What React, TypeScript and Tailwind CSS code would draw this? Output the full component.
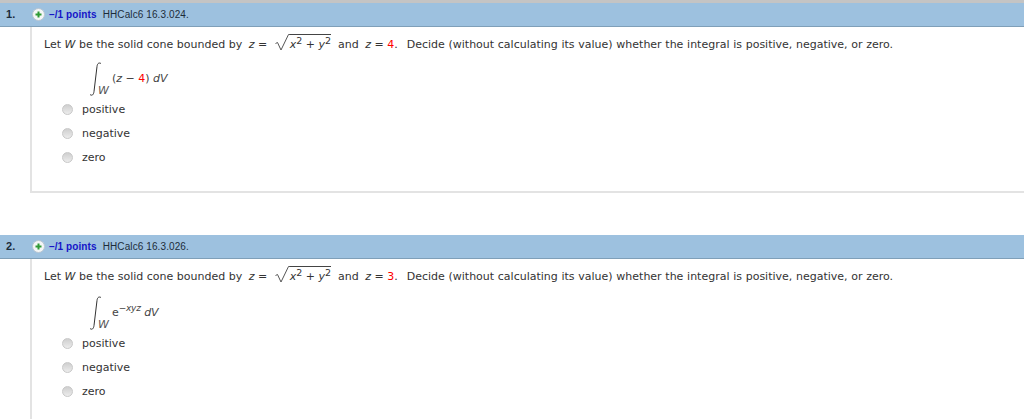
const sans = "font-['DejaVu_Sans',sans-serif]";

function Plus() {
  return (
    <span className="flex h-[13px] w-[13px] items-center justify-center rounded-full border border-[#b9c6d2] bg-[#f4f6f6]">
      <svg width="7" height="7" viewBox="0 0 7 7">
        <path d="M3.5 0.5v6M0.5 3.5h6" stroke="#2f9a35" strokeWidth="2" />
      </svg>
    </span>
  );
}

function Radio({ label }: { label: string }) {
  return (
    <div className="flex h-[24px] items-center">
      <span className="mb-[2px] h-[11px] w-[11px] rounded-full border border-[#c8c8c8] bg-gradient-to-b from-[#cfcfcf] to-[#ececec]" />
      <span className="ml-[9px] text-[11px] text-[#333]">{label}</span>
    </div>
  );
}

function Root() {
  return (
    <span className="ml-[4px] mr-[7px] inline-flex h-[22px] items-stretch">
      <svg width="15" height="17" viewBox="0 0 15 17">
        <path d="M0.5 9.5l2 -1 3.5 7.5 7.5 -15.5h1.5" fill="none" stroke="#555" strokeWidth="1" />
      </svg>
      <span className="h-[17px] border-t border-[#444] leading-[20px]">
        <i>x</i>
        <sup className="top-[-4px] text-[9.5px]">2</sup>
        <span> + </span>
        <i>y</i>
        <sup className="top-[-4px] text-[9.5px]">2</sup>
      </span>
    </span>
  );
}

function Integral({ top, children }: { top: string; children: React.ReactNode }) {
  return (
    <div className={`ml-[45px] flex h-[36px] items-center ${top}`}>
      <div className="relative h-[36px] w-[23px]">
        <svg width="14" height="36" viewBox="0 0 14 36" className="absolute left-0 top-0">
          <path d="M1 33.5c2 1.5 3.5 0.5 4 -3l3 -25c0.5 -3.5 2 -4 4 -3" fill="none" stroke="#333" strokeWidth="1" />
        </svg>
        <i className="absolute bottom-[-2px] left-[9px] text-[11px] text-[#555]">W</i>
      </div>
      <span className="text-[11px] text-[#444]">{children}</span>
    </div>
  );
}

function Question({ num, code, bound, height, children }: { num: string; code: string; bound: string; height: string; children: React.ReactNode }) {
  return (
    <section className={height}>
      <div className="flex h-[24px] items-center border-b border-[#7f9fb8] bg-[#9dc1df] font-['Liberation_Sans',sans-serif] text-[10px] tracking-[0.01em] text-[#1c2c3a]">
        <b className="w-[32px] pl-[6px] text-[11px]">{num}</b>
        <Plus />
        <b className="ml-[4px] text-[#1515c8]">–/1 points</b>
        <span className="ml-[6px]">{code}</span>
      </div>
      <div className={`ml-[30px] h-[calc(100%-24px)] border-l-2 border-[#e3e3e3] pl-[12px] pt-[7px] ${sans}`}>
        <p className="flex h-[22px] items-center whitespace-pre text-[11px] text-[#333]">
          Let <i>W</i> be the solid cone bounded by <i className="ml-[3px]">z</i> = <Root />and <i className="ml-[3px]">z</i> = <span className="text-[#f00]">{bound}</span>.
          <span className="ml-[9px] [word-spacing:0.2px]">Decide (without calculating its value) whether the integral is positive, negative, or zero.</span>
        </p>
        {children}
        <div className="ml-[18px] mt-[1px]">
          <Radio label="positive" />
          <Radio label="negative" />
          <Radio label="zero" />
        </div>
      </div>
    </section>
  );
}

export default function App() {
  return (
    <div className="h-[419px] overflow-hidden bg-white">
      <div className="h-[3px] bg-[#c4c4c4]" />
      <Question num="1." code="HHCalc6 16.3.024." bound="4" height="h-[188px]">
        <Integral top="mt-[5px]">
          (<i>z</i> − <span className="text-[#f00]">4</span>) <i>dV</i>
        </Integral>
      </Question>
      <div className="ml-[30px] h-[2px] bg-[#e3e3e3]" />
      <div className="h-[42px]" />
      <Question num="2." code="HHCalc6 16.3.026." bound="3" height="h-[190px]">
        <Integral top="mt-[7px]">
          e<sup className="text-[9px] tracking-[-0.03em]"><i>−xyz</i></sup> <i>dV</i>
        </Integral>
      </Question>
    </div>
  );
}
